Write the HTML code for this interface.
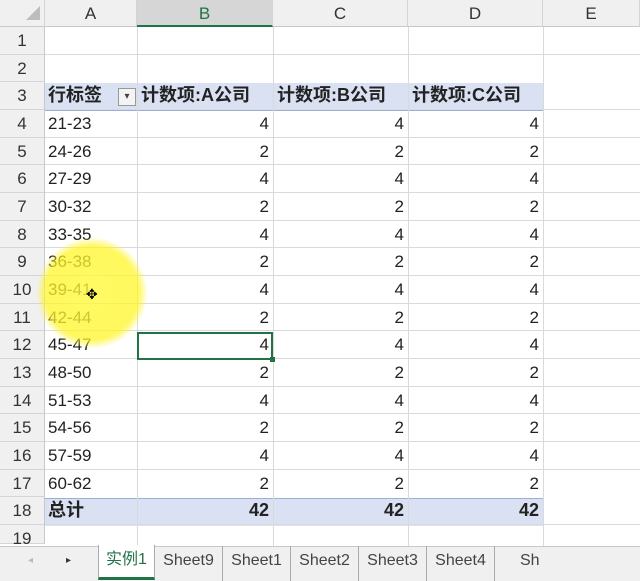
<!DOCTYPE html>
<html><head><meta charset="utf-8"><style>
*{margin:0;padding:0;box-sizing:border-box}
body{width:640px;height:581px;overflow:hidden;background:#fff;font-family:"Liberation Sans","Noto Sans CJK SC",sans-serif;position:relative}
.a{position:absolute}
.ch{top:0;height:27px;background:#f0f0f0;border-right:1px solid #d4d4d4;border-bottom:1px solid #c8c8c8;text-align:center;line-height:27px;font-size:17px;color:#333}
.rh{left:0;width:45px;background:#f0f0f0;border-bottom:1px solid #d4d4d4;border-right:1px solid #c8c8c8;text-align:center;font-size:17px;color:#333}
.vl{top:27px;width:1px;height:519px;background:#dadada}
.hl{left:45px;width:595px;height:1px;background:#dadada}
.c{font-size:17px;color:#222;white-space:nowrap;height:27px;line-height:27px}
.r{text-align:right}
.tab{top:546px;height:35px;line-height:30px;font-size:16px;color:#444;text-align:center;border-right:1px solid #aaa}
</style></head><body>
<div class="a ch" style="left:0;width:45px;background:#f0f0f0"></div>
<div class="a" style="left:26px;top:6px;width:0;height:0;border-left:14px solid transparent;border-bottom:14px solid #bdbdbd"></div>
<div class="a ch" style="left:45px;width:92px">A</div>
<div class="a ch" style="left:137px;width:136px;background:#d6d6d6;color:#217346;border-bottom:2px solid #217346">B</div>
<div class="a ch" style="left:273px;width:135px">C</div>
<div class="a ch" style="left:408px;width:135px">D</div>
<div class="a ch" style="left:543px;width:97px">E</div>
<div class="a" style="left:45px;top:83px;width:498px;height:28px;background:#d9e1f2;border-bottom:1px solid #9bb0d8"></div>
<div class="a" style="left:45px;top:498px;width:498px;height:28px;background:#d9e1f2;border-top:1px solid #9bb0d8"></div>
<div id="g"></div>
<div class="a" style="left:137px;top:332px;width:136px;height:28px;border:2px solid #217346"></div>
<div class="a" style="left:270px;top:357px;width:5px;height:5px;background:#217346"></div>
<div class="a" style="left:37px;top:238px;width:110px;height:110px;border-radius:50%;background:radial-gradient(circle,rgba(255,250,60,.8) 0%,rgba(255,245,40,.75) 60%,rgba(255,245,60,0) 72%)"></div>
<div class="a" style="left:118px;top:88px;width:18px;height:18px;border:1px solid #999;background:#f4f4f4;font-size:10px;text-align:center;line-height:16px;color:#444">▾</div>
<div class="a" style="left:86px;top:286px;font-size:14px;color:#000">✥</div>
<div class="a" style="left:0;top:546px;width:640px;height:35px;background:#f0f0f0;border-top:1px solid #c8c8c8"></div>
<div class="a" style="left:28px;top:555px;font-size:10px;color:#bbb">◂</div>
<div class="a" style="left:66px;top:555px;font-size:10px;color:#333">▸</div>
<div class="a tab" style="left:98px;width:57px;background:#fff;color:#217346;border-left:1px solid #aaa;border-bottom:3px solid #217346;top:545px">实例1</div>
<div class="a tab" style="left:155px;width:68px">Sheet9</div>
<div class="a tab" style="left:223px;width:68px">Sheet1</div>
<div class="a tab" style="left:291px;width:68px">Sheet2</div>
<div class="a tab" style="left:359px;width:68px">Sheet3</div>
<div class="a tab" style="left:427px;width:68px">Sheet4</div>
<div class="a tab" style="left:495px;width:60px;text-align:left;padding-left:25px;border:none">Sh</div>
<script>
var g=document.getElementById('g'),h='',H=27.67;
[137,273,408,543].forEach(function(x){h+='<div class="a vl" style="left:'+x+'px"></div>'});
var lab=['','','行标签','21-23','24-26','27-29','30-32','33-35','36-38','39-41','42-44','45-47','48-50','51-53','54-56','57-59','60-62','总计',''];
for(var i=1;i<=19;i++){var t=27+(i-1)*H;
h+='<div class="a rh" style="top:'+t+'px;height:'+(i==19?19:H)+'px;line-height:'+H+'px">'+i+'</div>';
if(i!=2&&i!=17)h+='<div class="a hl" style="top:'+(t+H-1)+'px"></div>';
var y=t,b=(i==3||i==18)?'font-weight:bold;font-size:18px;':'';
if(lab[i-1])h+='<div class="a c" style="left:48px;top:'+y+'px;'+b+'">'+lab[i-1]+'</div>';
if(i==3){['计数项:A公司','计数项:B公司','计数项:C公司'].forEach(function(s,k){h+='<div class="a c" style="left:'+[141,277,412][k]+'px;top:'+y+'px;'+b+'">'+s+'</div>'})}
else if(i>=4&&i<=18){var v=i==18?'42':(i%2==0?'4':'2');[137,273,408].forEach(function(x,k){h+='<div class="a c r" style="left:'+x+'px;width:'+(k==0?132:131)+'px;top:'+y+'px;'+b+'">'+v+'</div>'})}
}
g.innerHTML=h;
</script>
</body></html>
